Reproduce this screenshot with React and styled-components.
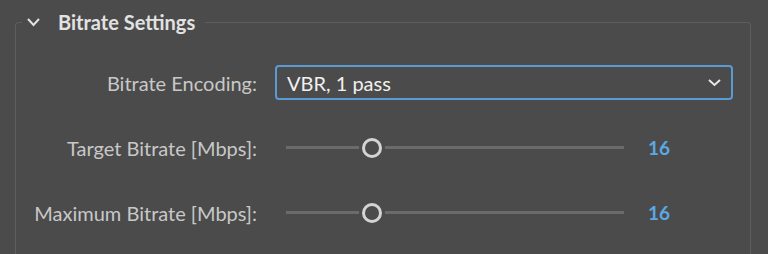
import React from "react";
import styled, { createGlobalStyle } from "styled-components";

const GlobalStyle = createGlobalStyle`
  html, body {
    margin: 0;
    padding: 0;
    background: #4b4b4b;
    overflow: hidden;
  }
  body {
    font-family: Lato, "Open Sans", sans-serif;
  }
`;

const Page = styled.div`
  width: 768px;
  height: 254px;
  padding: 8px 17px 0 15px;
  box-sizing: border-box;
`;

const Group = styled.fieldset`
  margin: 0;
  padding: 29px 17px 0 0;
  border: 1px solid #5e5e5e;
  border-bottom: none;
  border-radius: 4px 4px 0 0;
  height: 100%;
  box-sizing: border-box;
`;

const Legend = styled.legend`
  display: flex;
  align-items: center;
  gap: 18px;
  margin-left: 6px;
  padding: 0 10px 0 5px;
  height: 28px;
  font-size: 20px;
  font-weight: 700;
  color: #e2e2e2;
`;

const Form = styled.div`
  display: grid;
  grid-template-columns: 241px 1fr;
  grid-auto-rows: 35px;
  column-gap: 18px;
  row-gap: 30px;
  align-items: center;
`;

const Label = styled.label`
  text-align: right;
  font-size: 20px;
  color: #c8c8c8;
  white-space: nowrap;
`;

const Select = styled.div`
  height: 35px;
  box-sizing: border-box;
  border: 2px solid #5b9bd3;
  border-radius: 4px;
  display: flex;
  align-items: center;
  justify-content: space-between;
  padding: 0 10px 0 10px;
  font-size: 20px;
  color: #f0f0f0;
`;

const SliderRow = styled.div`
  display: flex;
  align-items: center;
  padding-left: 11px;
  gap: 24px;
`;

const Track = styled.div`
  position: relative;
  width: 338px;
  height: 3px;
  background: #6b6b6b;
`;

const Thumb = styled.div`
  position: absolute;
  top: 50%;
  width: 20px;
  height: 20px;
  box-sizing: border-box;
  border: 3px solid #d4d4d4;
  border-radius: 50%;
  background: #4b4b4b;
  transform: translate(-50%, -50%);
  box-shadow: 0 0 0 3px #4b4b4b;
`;

const Value = styled.span`
  font-size: 19px;
  font-weight: 700;
  color: #5aa8e4;
`;

function Chevron({ w = 13, h = 7, color = "#e2e2e2" }) {
  return (
    <svg width={w} height={h + 2} viewBox={`0 0 ${w} ${h + 2}`}>
      <polyline
        points={`1,1 ${w / 2},${h} ${w - 1},1`}
        fill="none"
        stroke={color}
        strokeWidth="2"
      />
    </svg>
  );
}

function Slider({ value, max }) {
  return (
    <SliderRow>
      <Track>
        <Thumb style={{ left: `${(value / max) * 100}%` }} />
      </Track>
      <Value>{value}</Value>
    </SliderRow>
  );
}

export default function App() {
  return (
    <Page>
      <GlobalStyle />
      <Group>
        <Legend>
          <Chevron />
          <span>Bitrate Settings</span>
        </Legend>
        <Form>
          <Label>Bitrate Encoding:</Label>
          <Select>
            <span>VBR, 1 pass</span>
            <Chevron w={13} h={6} color="#e8e8e8" />
          </Select>
          <Label>Target Bitrate [Mbps]:</Label>
          <Slider value={16} max={63} />
          <Label>Maximum Bitrate [Mbps]:</Label>
          <Slider value={16} max={63} />
        </Form>
      </Group>
    </Page>
  );
}
